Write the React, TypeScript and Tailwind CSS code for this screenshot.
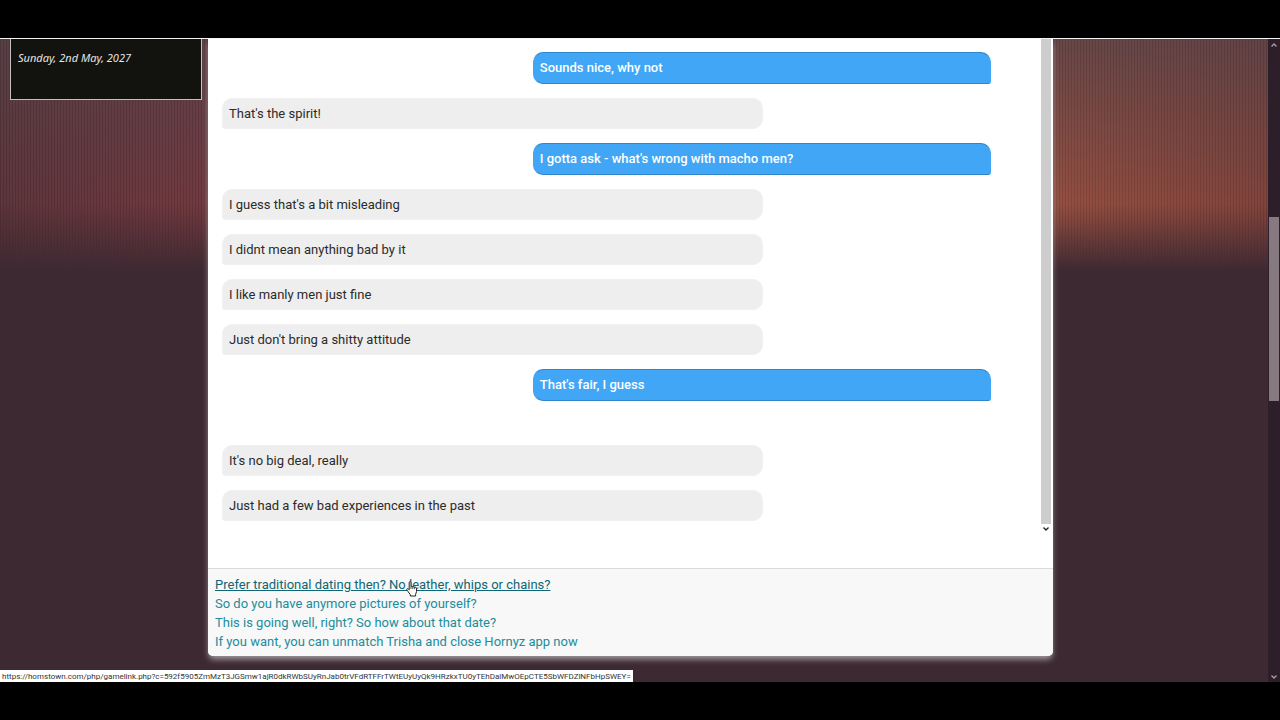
import clsx from "clsx";

type Message = {
  from: "me" | "her";
  text: string;
};

const conversation: Message[][] = [
  [
    { from: "me", text: "Sounds nice, why not" },
    { from: "her", text: "That's the spirit!" },
    { from: "me", text: "I gotta ask - what's wrong with macho men?" },
    { from: "her", text: "I guess that's a bit misleading" },
    { from: "her", text: "I didnt mean anything bad by it" },
    { from: "her", text: "I like manly men just fine" },
    { from: "her", text: "Just don't bring a shitty attitude" },
    { from: "me", text: "That's fair, I guess" },
  ],
  [
    { from: "her", text: "It's no big deal, really" },
    { from: "her", text: "Just had a few bad experiences in the past" },
  ],
];

const replies = [
  "Prefer traditional dating then? No leather, whips or chains?",
  "So do you have anymore pictures of yourself?",
  "This is going well, right? So how about that date?",
  "If you want, you can unmatch Trisha and close Hornyz app now",
];

const Arrow = ({ up, className }: { up?: boolean; className?: string }) => (
  <svg viewBox="0 0 6 6" className={clsx("w-[6px] h-[6px]", className)} fill="none" stroke="currentColor" strokeWidth="1.4">
    <path d={up ? "M.5 4.5 3 2 5.5 4.5" : "M.5 1.5 3 4 5.5 1.5"} />
  </svg>
);

const HandCursor = () => (
  <svg viewBox="0 0 12 16" className="absolute left-[198px] top-[12px] w-[12px] h-[16px] pointer-events-none">
    <path
      d="M3.2 1.5c0-1.2 1.8-1.2 1.8 0v4.2c.3-.6 1.7-.5 1.8.3.4-.5 1.7-.3 1.8.4.5-.4 1.9-.2 1.9.9v3.2c0 1.2-.8 1.9-.9 2.8v1.7H4.3v-1.4C3.5 12.7 2.7 11.3 1.9 10.3 1.2 9.4.5 8.7.7 8.1c.3-.8 1.5-.5 2.5.7z"
      fill="#fff"
      stroke="#222"
      strokeWidth="1"
      strokeLinejoin="round"
    />
    <path d="M5 5.7v2.3M6.8 6v2M8.6 6.4v1.8" stroke="#222" strokeWidth=".8" />
  </svg>
);

const Bubble = ({ from, text }: Message) => (
  <p
    className={clsx(
      "px-[6px] text-[13px] border",
      from === "me"
        ? "self-end w-[55%] mr-[50px] leading-[30px] bg-[#40a6f5] border-[#40a6f5] border-y-[#2f86cb] text-white font-medium rounded-t-[10px] rounded-bl-[10px] rounded-br-[3px]"
        : "w-[65%] ml-[14px] leading-[29px] bg-[#eeeeee] border-[#f1f1f1] text-[#2b2b2b] rounded-tl-[10px] rounded-r-[10px] rounded-bl-[3px]"
    )}
  >
    {text}
  </p>
);

export default function App() {
  return (
    <div className="h-screen flex flex-col bg-black font-['Roboto',sans-serif]">
      <div className="relative flex-1 min-h-0 my-[38px] flex overflow-hidden border-t border-[#f4f4f4] bg-[linear-gradient(to_bottom,transparent_165px,#3d2932_232px),repeating-linear-gradient(to_right,#0000001f_0_1px,transparent_1px_3px),linear-gradient(to_bottom,#54434ab8,transparent_185px),linear-gradient(to_right,#5e3439,#74393f_16%,#9a5040_82%,#84433b)]">
        <aside className="w-[208px] shrink-0 pl-[10px] pr-[6px]">
          <div className="h-[61px] px-[7px] pt-[10px] bg-[#12130e] border border-t-0 border-[#c4c0c0]">
            <p className="font-['Noto_Sans',sans-serif] text-[11px] leading-[18px] italic text-[#e6e6e6]">Sunday, 2nd May, 2027</p>
          </div>
        </aside>

        <main className="w-[66%] self-start flex flex-col bg-white rounded-b-[5px] shadow-[0_4px_6px_-1px_#a8a2a5]">
          <div className="flex h-[495px]">
            <div className="flex-1 flex flex-col gap-[44px] pt-[13px]">
              {conversation.map((group, i) => (
                <div key={i} className="flex flex-col gap-[14px]">
                  {group.map((m) => (
                    <Bubble key={m.text} {...m} />
                  ))}
                </div>
              ))}
            </div>
            <div className="w-[12px] flex flex-col">
              <div className="flex-1 w-[10px] bg-[#cdcdcd]" />
              <Arrow className="m-[2px] text-[#222]" />
            </div>
          </div>

          <nav className="relative mt-[34px] px-[7px] pt-[6px] pb-[5px] flex flex-col items-start bg-[#f8f8f8] border-t border-[#dadada] rounded-b-[5px]">
            {replies.map((reply, i) => (
              <a
                key={reply}
                href="#"
                className={clsx(
                  "text-[13px] leading-[19px]",
                  i === 0 ? "underline text-[#0f6674]" : "text-[#218c9d]"
                )}
              >
                {reply}
              </a>
            ))}
            <HandCursor />
          </nav>
        </main>

        {/* page scrollbar */}
        <div className="ml-auto w-[12px] flex flex-col items-center bg-[#2d1f29] text-[#a79ca3]">
          <Arrow up className="my-[3px]" />
          <div className="flex-1 w-full pt-[166px] px-[1px]">
            <div className="h-[184px] bg-[#867a80]" />
          </div>
          <Arrow className="my-[2px]" />
        </div>

        {/* link target shown by the browser while hovering */}
        <div className="absolute left-0 bottom-0 h-[12px] px-[2px] bg-white text-[8px] leading-[14px] text-[#333] whitespace-nowrap">
          https://hornstown.com/php/gamelink.php?c=592f5905ZmMzT3JGSmw1ajR0dkRWbSUyRnJab0trVFdRTFFrTWtEUyUyQk9HRzkxTU0yTEhDalMwOEpCTE5SbWFDZlNFbHpSWEY=
        </div>
      </div>
    </div>
  );
}
